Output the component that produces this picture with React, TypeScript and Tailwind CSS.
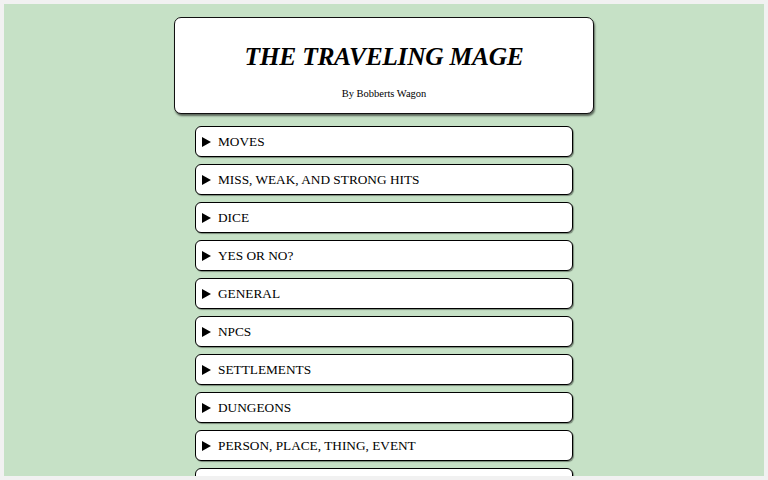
const sections = [
  "MOVES",
  "MISS, WEAK, AND STRONG HITS",
  "DICE",
  "YES OR NO?",
  "GENERAL",
  "NPCS",
  "SETTLEMENTS",
  "DUNGEONS",
  "PERSON, PLACE, THING, EVENT",
  "TREASURE",
];

const serif = { fontFamily: '"Liberation Serif", "DejaVu Serif", serif' };

export default function App() {
  return (
    <div className="h-screen bg-[#f1f1f1] p-1" style={serif}>
      <div className="h-full overflow-hidden bg-[#c6e1c6] pt-[13px]">
        <header className="mx-auto flex h-[97px] w-[420px] flex-col items-center rounded-[7px] border-[1.5px] border-[#111] bg-white pt-[22px] shadow-[1px_2px_2px_rgba(0,0,0,0.55)]">
          <h1 className="text-[25.5px] font-bold italic leading-[34px] tracking-[-0.3px] text-black">
            THE TRAVELING MAGE
          </h1>
          <p className="mt-[13px] text-[10.5px] leading-[14px] text-black">By Bobberts Wagon</p>
        </header>

        <div className="mx-auto mt-[12px] flex w-[378px] flex-col gap-[7px]">
          {sections.map((title) => (
            <div
              key={title}
              className="flex h-[31px] shrink-0 items-center gap-[7px] rounded-[6px] border-[1.5px] border-black bg-white px-[6px] shadow-[1px_1px_1px_rgba(0,0,0,0.4)]"
            >
              <svg width="9" height="10" viewBox="0 0 9 10" className="shrink-0">
                <path d="M0 0 L9 5 L0 10 Z" fill="#000" />
              </svg>
              <span className="text-[13.3px] leading-[18px] text-black">{title}</span>
            </div>
          ))}
        </div>
      </div>
    </div>
  );
}
